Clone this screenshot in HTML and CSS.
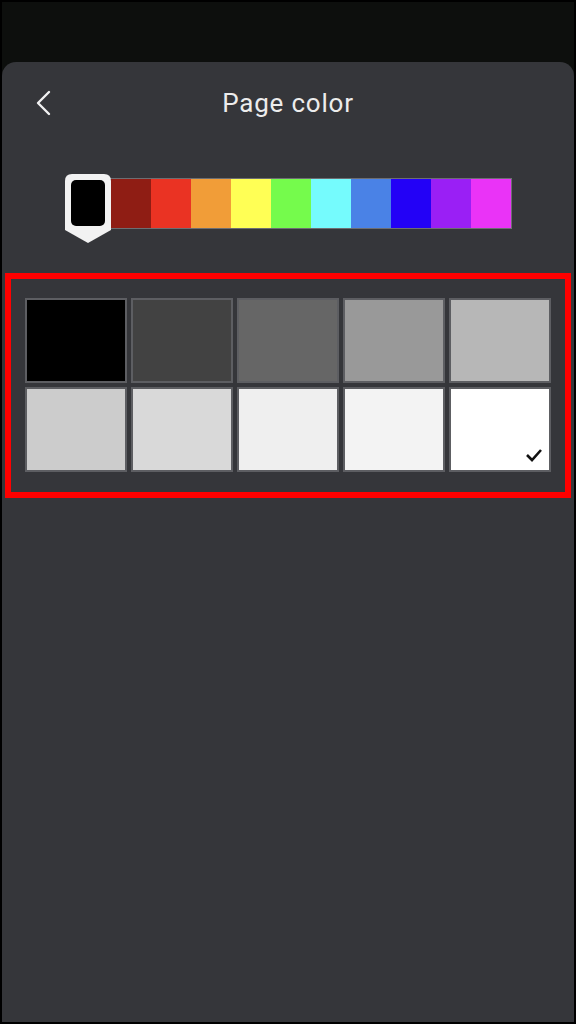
FILE: index.html
```html
<!DOCTYPE html>
<html lang="en">
<head>
<meta charset="utf-8">
<title>Page color</title>
<link rel="stylesheet" href="styles.css">
</head>
<body>
<div class="device">
  <div class="status"></div>
  <div class="sheet">
    <header class="header">
      <div class="back">
        <svg width="18" height="26" viewBox="0 0 18 26"><polyline points="14,2 3,13 14,24" fill="none" stroke="#f1f1f1" stroke-width="2.4" stroke-linecap="round" stroke-linejoin="round"/></svg>
      </div>
      <h1 class="title">Page color</h1>
      <div></div>
    </header>

    <div class="palette">
      <div class="bar">
        <span class="seg" style="background:#000000"></span>
        <span class="seg" style="background:#8f1d14"></span>
        <span class="seg" style="background:#ea3323"></span>
        <span class="seg" style="background:#f19d38"></span>
        <span class="seg" style="background:#ffff55"></span>
        <span class="seg" style="background:#75fb4c"></span>
        <span class="seg" style="background:#75fbfd"></span>
        <span class="seg" style="background:#4a82e6"></span>
        <span class="seg" style="background:#2301f6"></span>
        <span class="seg" style="background:#9a1ff5"></span>
        <span class="seg" style="background:#ea33f7"></span>
      </div>
      <svg class="picker" width="46" height="70" viewBox="0 0 46 70">
        <path d="M7,0 H39 Q46,0 46,7 V56 L23,69 L0,56 V7 Q0,0 7,0 Z" fill="#f2f2f2"/>
        <rect x="6" y="6" width="34" height="46" rx="5" fill="#000"/>
      </svg>
    </div>

    <section class="highlight">
      <div class="grid">
        <div class="cell" style="background:#000000"></div>
        <div class="cell" style="background:#424242"></div>
        <div class="cell" style="background:#666666"></div>
        <div class="cell" style="background:#999999"></div>
        <div class="cell" style="background:#b7b7b7"></div>
        <div class="cell" style="background:#cccccc"></div>
        <div class="cell" style="background:#d9d9d9"></div>
        <div class="cell" style="background:#efefef"></div>
        <div class="cell" style="background:#f3f3f3"></div>
        <div class="cell selected" style="background:#ffffff">
          <svg width="18" height="14" viewBox="0 0 18 14"><polyline points="2,7 7,12 16,2" fill="none" stroke="#111" stroke-width="2.6"/></svg>
        </div>
      </div>
    </section>
  </div>
</div>
</body>
</html>
```

FILE: styles.css
```css
* { box-sizing: border-box; }
html, body { margin: 0; padding: 0; }
body {
  background: #000;
  font-family: Roboto, "Open Sans", "Liberation Sans", sans-serif;
}
.device {
  width: 572px;
  height: 1020px;
  margin: 2px;
  display: flex;
  flex-direction: column;
  background: #0d0f0d;
}
.status {
  height: 60px;
  flex: none;
  background: #0d0f0d;
}
.sheet {
  flex: 1;
  background: #35363a;
  border-radius: 14px 14px 0 0;
  display: flex;
  flex-direction: column;
}
.header {
  height: 82px;
  display: grid;
  grid-template-columns: 1fr auto 1fr;
  align-items: center;
}
.back {
  padding-left: 33px;
  display: flex;
  align-items: center;
}
.back svg { display: block; }
.title {
  margin: 0;
  font-size: 26px;
  line-height: 30px;
  font-weight: 400;
  color: #ececec;
  letter-spacing: 0.8px;
}
.palette {
  position: relative;
  margin-top: 30px;
  margin-left: 63px;
  height: 70px;
}
.bar {
  margin-left: 5px;
  margin-top: 4px;
  width: 442px;
  height: 51px;
  display: flex;
  border: 1px solid #6d6e72;
}
.seg {
  flex: 1;
}
.picker {
  position: absolute;
  left: 0;
  top: 0;
  display: block;
}
.highlight {
  margin: 29px 3px 0 3px;
  width: 566px;
  border: 6px solid #ff0000;
  padding: 19px 14px 20px 14px;
}
.grid {
  display: grid;
  grid-template-columns: repeat(5, 102px);
  grid-auto-rows: 85px;
  gap: 4px;
}
.cell {
  border: 2px solid #5d5e62;
}
.selected {
  display: flex;
  align-items: flex-end;
  justify-content: flex-end;
  padding: 0 6px 8px 0;
}
.selected svg { display: block; }
```
